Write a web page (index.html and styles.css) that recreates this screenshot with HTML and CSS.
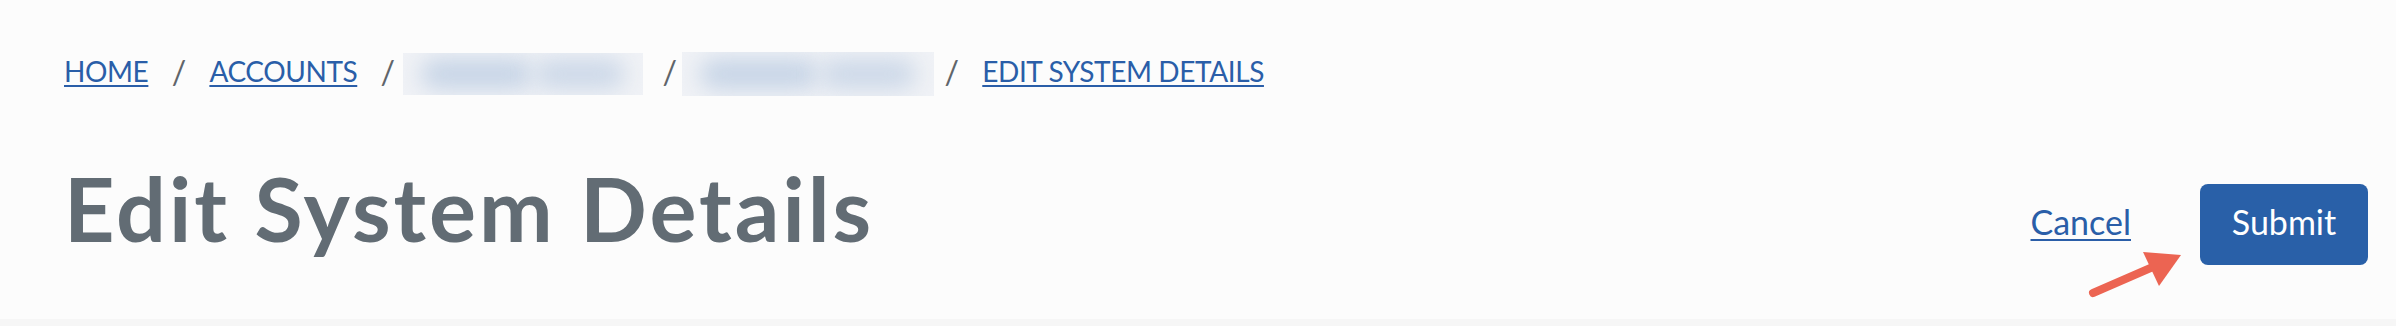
FILE: index.html
```html
<!DOCTYPE html>
<html lang="en">
<head>
    <meta charset="UTF-8">
    <meta name="viewport" content="width=device-width, initial-scale=1.0">
    <title>Edit System Details</title>
    <link rel="stylesheet" href="styles.css">
</head>
<body>
    <div class="page">
        <nav class="breadcrumb">
            <a href="#" class="crumb">HOME</a>
            <span class="sep">/</span>
            <a href="#" class="crumb">ACCOUNTS</a>
            <span class="sep">/</span>
            <span class="redacted redacted-1"><span class="blob"></span><span class="blob blob-small"></span></span>
            <span class="sep">/</span>
            <span class="redacted redacted-2"><span class="blob"></span><span class="blob blob-small"></span></span>
            <span class="sep">/</span>
            <a href="#" class="crumb">EDIT SYSTEM DETAILS</a>
        </nav>

        <header class="page-header">
            <h1>Edit System Details</h1>
            <div class="actions">
                <a href="#" class="cancel">Cancel</a>
                <button class="submit">Submit</button>
                <!-- anotação da captura -->
                <svg class="arrow" width="110" height="60" viewBox="0 0 110 60">
                    <line x1="13" y1="53" x2="82" y2="23" stroke="#ec6452" stroke-width="8" stroke-linecap="round"/>
                    <polygon points="63,12 101,15 79,46" fill="#ec6452"/>
                </svg>
            </div>
        </header>
    </div>
    <div class="band"></div>
</body>
</html>
```

FILE: styles.css
```css
body {
    margin: 0;
    background-color: #fcfcfc;
    font-family: "Lato", "Open Sans", sans-serif;
}

.page {
    height: 319px;
    box-sizing: border-box;
    padding: 52px 28px 0 64px;
}

.band { height: 7px; background-color: #f6f6f6; }

/* breadcrumbs */
.breadcrumb {
    display: flex;
    align-items: center;
    height: 44px;
}

.crumb {
    padding-bottom: 6px;
    color: #2a5ea8;
    font-size: 28px;
    letter-spacing: -0.4px;
    line-height: 1;
    text-decoration: underline;
    text-decoration-thickness: 2px;
    text-underline-offset: 3px;
}

.sep {
    width: 61px;
    padding-bottom: 4px;
    text-align: center;
    color: #60656a;
    font-size: 32px;
    line-height: 1;
}

.redacted {
    display: flex;
    align-items: center;
    gap: 2px;
    padding: 0 18px;
    box-sizing: border-box;
    overflow: hidden;
    background-color: #f0f2f6;
}
.redacted-1 { width: 240px; height: 42px; margin: 0 -4px 0 -15px; }
.redacted-2 { width: 252px; height: 44px; margin: 0 -13px 0 -18px; }

.blob {
    flex: 1;
    height: 30px;
    border-radius: 15px;
    background-color: #c6d4e6;
    filter: blur(11px);
}
.blob-small { flex: 0.8; background-color: #ccd8e8; }

/* title row */
.page-header {
    display: flex;
    justify-content: space-between;
    align-items: flex-start;
    margin-top: 68px;
}

h1 {
    margin: 0;
    color: #626c74;
    font-size: 88px;
    font-weight: 700;
    letter-spacing: 3px;
    line-height: 1;
}

.actions {
    position: relative;
    display: flex;
    align-items: baseline;
    gap: 69px;
    margin-top: 20px;
}

.cancel {
    color: #2a5ea8;
    font-size: 34px;
    text-decoration: underline;
    text-decoration-thickness: 2px;
    text-underline-offset: 4px;
}

.submit {
    width: 168px;
    height: 81px;
    padding: 21px 0 26px;
    box-sizing: border-box;
    border: none;
    border-radius: 8px;
    background-color: #2960a8;
    color: white;
    font-family: inherit;
    font-size: 34px;
    line-height: 1;
}

.arrow {
    position: absolute;
    left: 49px;
    top: 56px;
}
```
